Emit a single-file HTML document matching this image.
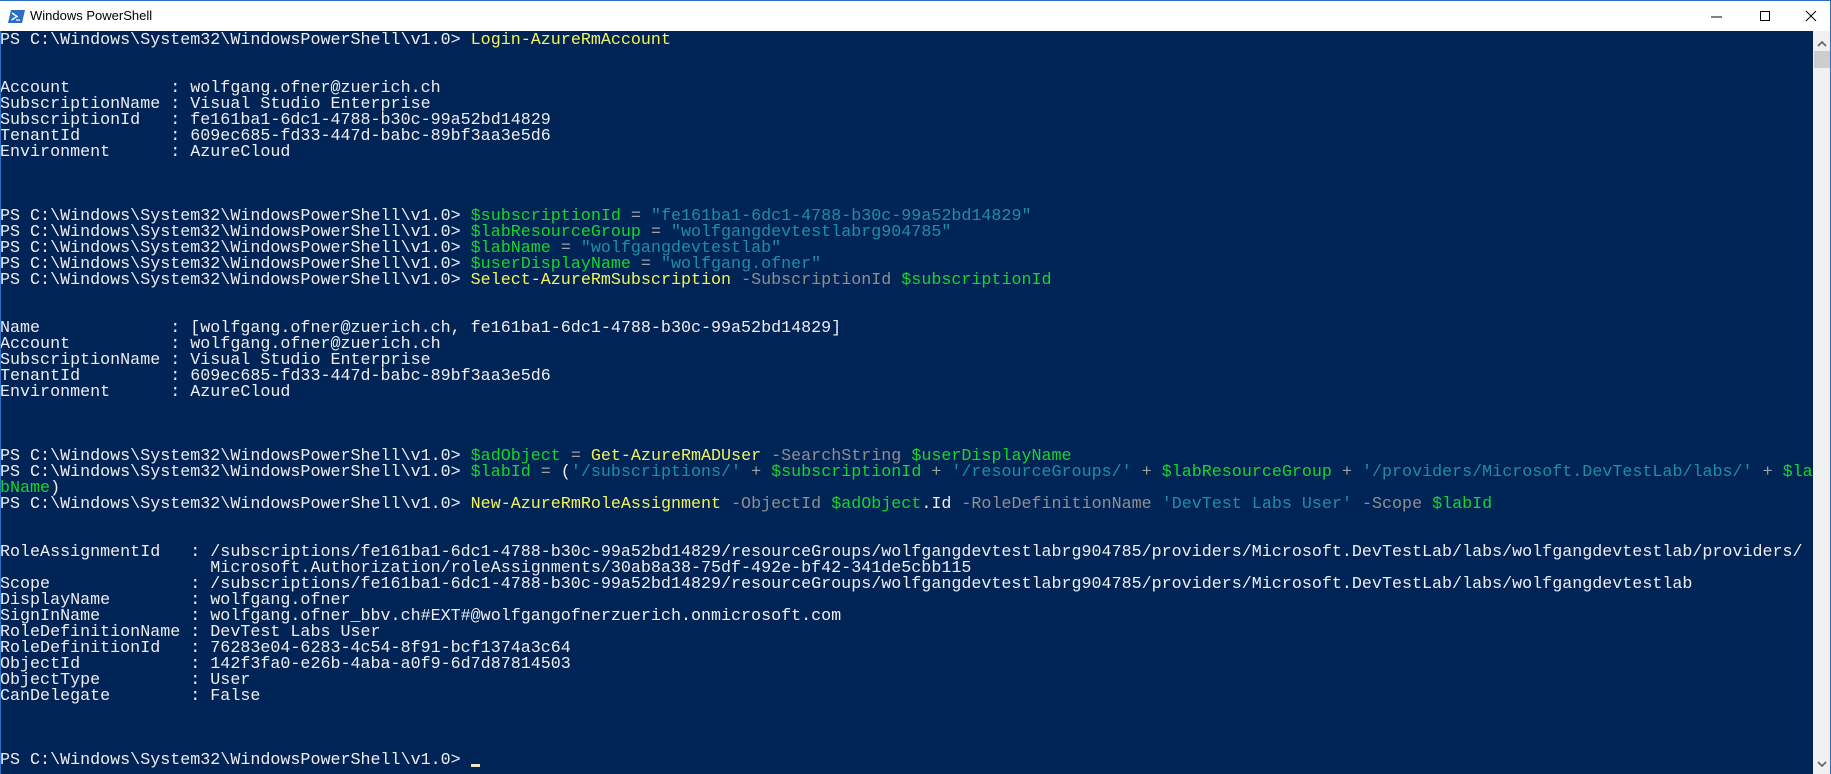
<!DOCTYPE html>
<html><head><meta charset="utf-8"><style>
html,body{margin:0;padding:0;width:1831px;height:774px;overflow:hidden;background:#fff;}
#title{position:absolute;left:0;top:0;width:1831px;height:31px;background:#fff;border-top:1px solid #2b6fc4;box-sizing:border-box;}
#title .t{position:absolute;left:30px;top:7px;font:13px "Liberation Sans",sans-serif;color:#000;}
#con{position:absolute;left:0;top:31px;width:1813px;height:743px;background:#012456;overflow:hidden;border-left:1px solid #2b6fc4;box-sizing:border-box;}
pre{margin:0;padding:0 0 0 0;font:16.7px/16px "Liberation Mono",monospace;color:#eeedf0;white-space:pre;position:absolute;left:-1px;top:2px;}
.y{color:#f2f25c}.g{color:#16d62c}.s{color:#1e8fa0}.o{color:#a0a0a0}.p{color:#8f8f8f}
#sb{position:absolute;left:1813px;top:31px;width:17px;height:743px;background:#f0f0f0;}
#rb{position:absolute;left:1830px;top:0;width:1px;height:774px;background:#2b6fc4;}
.cur{display:inline-block;width:9px;height:3px;background:#f6e2c4;vertical-align:-3px;}
</style></head><body>
<div id="title">
<svg style="position:absolute;left:8px;top:9px" width="17" height="13" viewBox="0 0 17 13"><polygon points="3,0 17,0 14,13 0,13" fill="#2a6ec5"/><path d="M4,3 L9,6.5 L3.5,10" stroke="#fff" stroke-width="1.5" fill="none"/><path d="M8,10 L12,10" stroke="#fff" stroke-width="1.3"/></svg>
<span class="t">Windows PowerShell</span>
<svg style="position:absolute;left:1710px;top:8px" width="110" height="16"><path d="M1,8 H12" stroke="#000" stroke-width="1"/><rect x="50.5" y="2.5" width="9" height="9" fill="none" stroke="#000"/><path d="M96,2 L106,12 M106,2 L96,12" stroke="#000" stroke-width="1"/></svg>
</div>
<div id="con"><pre>PS C:\Windows\System32\WindowsPowerShell\v1.0&gt; <span class="y">Login-AzureRmAccount</span>


Account          : wolfgang.ofner@zuerich.ch
SubscriptionName : Visual Studio Enterprise
SubscriptionId   : fe161ba1-6dc1-4788-b30c-99a52bd14829
TenantId         : 609ec685-fd33-447d-babc-89bf3aa3e5d6
Environment      : AzureCloud



PS C:\Windows\System32\WindowsPowerShell\v1.0&gt; <span class="g">$subscriptionId</span> <span class="o">=</span> <span class="s">"fe161ba1-6dc1-4788-b30c-99a52bd14829"</span>
PS C:\Windows\System32\WindowsPowerShell\v1.0&gt; <span class="g">$labResourceGroup</span> <span class="o">=</span> <span class="s">"wolfgangdevtestlabrg904785"</span>
PS C:\Windows\System32\WindowsPowerShell\v1.0&gt; <span class="g">$labName</span> <span class="o">=</span> <span class="s">"wolfgangdevtestlab"</span>
PS C:\Windows\System32\WindowsPowerShell\v1.0&gt; <span class="g">$userDisplayName</span> <span class="o">=</span> <span class="s">"wolfgang.ofner"</span>
PS C:\Windows\System32\WindowsPowerShell\v1.0&gt; <span class="y">Select-AzureRmSubscription</span> <span class="p">-SubscriptionId</span> <span class="g">$subscriptionId</span>


Name             : [wolfgang.ofner@zuerich.ch, fe161ba1-6dc1-4788-b30c-99a52bd14829]
Account          : wolfgang.ofner@zuerich.ch
SubscriptionName : Visual Studio Enterprise
TenantId         : 609ec685-fd33-447d-babc-89bf3aa3e5d6
Environment      : AzureCloud



PS C:\Windows\System32\WindowsPowerShell\v1.0&gt; <span class="g">$adObject</span> <span class="o">=</span> <span class="y">Get-AzureRmADUser</span> <span class="p">-SearchString</span> <span class="g">$userDisplayName</span>
PS C:\Windows\System32\WindowsPowerShell\v1.0&gt; <span class="g">$labId</span> <span class="o">=</span> (<span class="s">'/subscriptions/'</span> <span class="o">+</span> <span class="g">$subscriptionId</span> <span class="o">+</span> <span class="s">'/resourceGroups/'</span> <span class="o">+</span> <span class="g">$labResourceGroup</span> <span class="o">+</span> <span class="s">'/providers/Microsoft.DevTestLab/labs/'</span> <span class="o">+</span> <span class="g">$la</span>
<span class="g">bName</span>)
PS C:\Windows\System32\WindowsPowerShell\v1.0&gt; <span class="y">New-AzureRmRoleAssignment</span> <span class="p">-ObjectId</span> <span class="g">$adObject</span>.Id <span class="p">-RoleDefinitionName</span> <span class="s">'DevTest Labs User'</span> <span class="p">-Scope</span> <span class="g">$labId</span>


RoleAssignmentId   : /subscriptions/fe161ba1-6dc1-4788-b30c-99a52bd14829/resourceGroups/wolfgangdevtestlabrg904785/providers/Microsoft.DevTestLab/labs/wolfgangdevtestlab/providers/
                     Microsoft.Authorization/roleAssignments/30ab8a38-75df-492e-bf42-341de5cbb115
Scope              : /subscriptions/fe161ba1-6dc1-4788-b30c-99a52bd14829/resourceGroups/wolfgangdevtestlabrg904785/providers/Microsoft.DevTestLab/labs/wolfgangdevtestlab
DisplayName        : wolfgang.ofner
SignInName         : wolfgang.ofner_bbv.ch#EXT#@wolfgangofnerzuerich.onmicrosoft.com
RoleDefinitionName : DevTest Labs User
RoleDefinitionId   : 76283e04-6283-4c54-8f91-bcf1374a3c64
ObjectId           : 142f3fa0-e26b-4aba-a0f9-6d7d87814503
ObjectType         : User
CanDelegate        : False



PS C:\Windows\System32\WindowsPowerShell\v1.0&gt; <span class="cur"></span></pre></div>
<div id="sb">
<svg style="position:absolute;left:4px;top:10px" width="10" height="6"><path d="M1,5 L5,1 L9,5" stroke="#606060" stroke-width="1.6" fill="none"/></svg>
<div style="position:absolute;left:1px;top:20px;width:16px;height:17px;background:#cdcdcd"></div>
<svg style="position:absolute;left:4px;top:730px" width="10" height="6"><path d="M1,1 L5,5 L9,1" stroke="#606060" stroke-width="1.6" fill="none"/></svg>
</div>
<div id="rb"></div>
</body></html>
